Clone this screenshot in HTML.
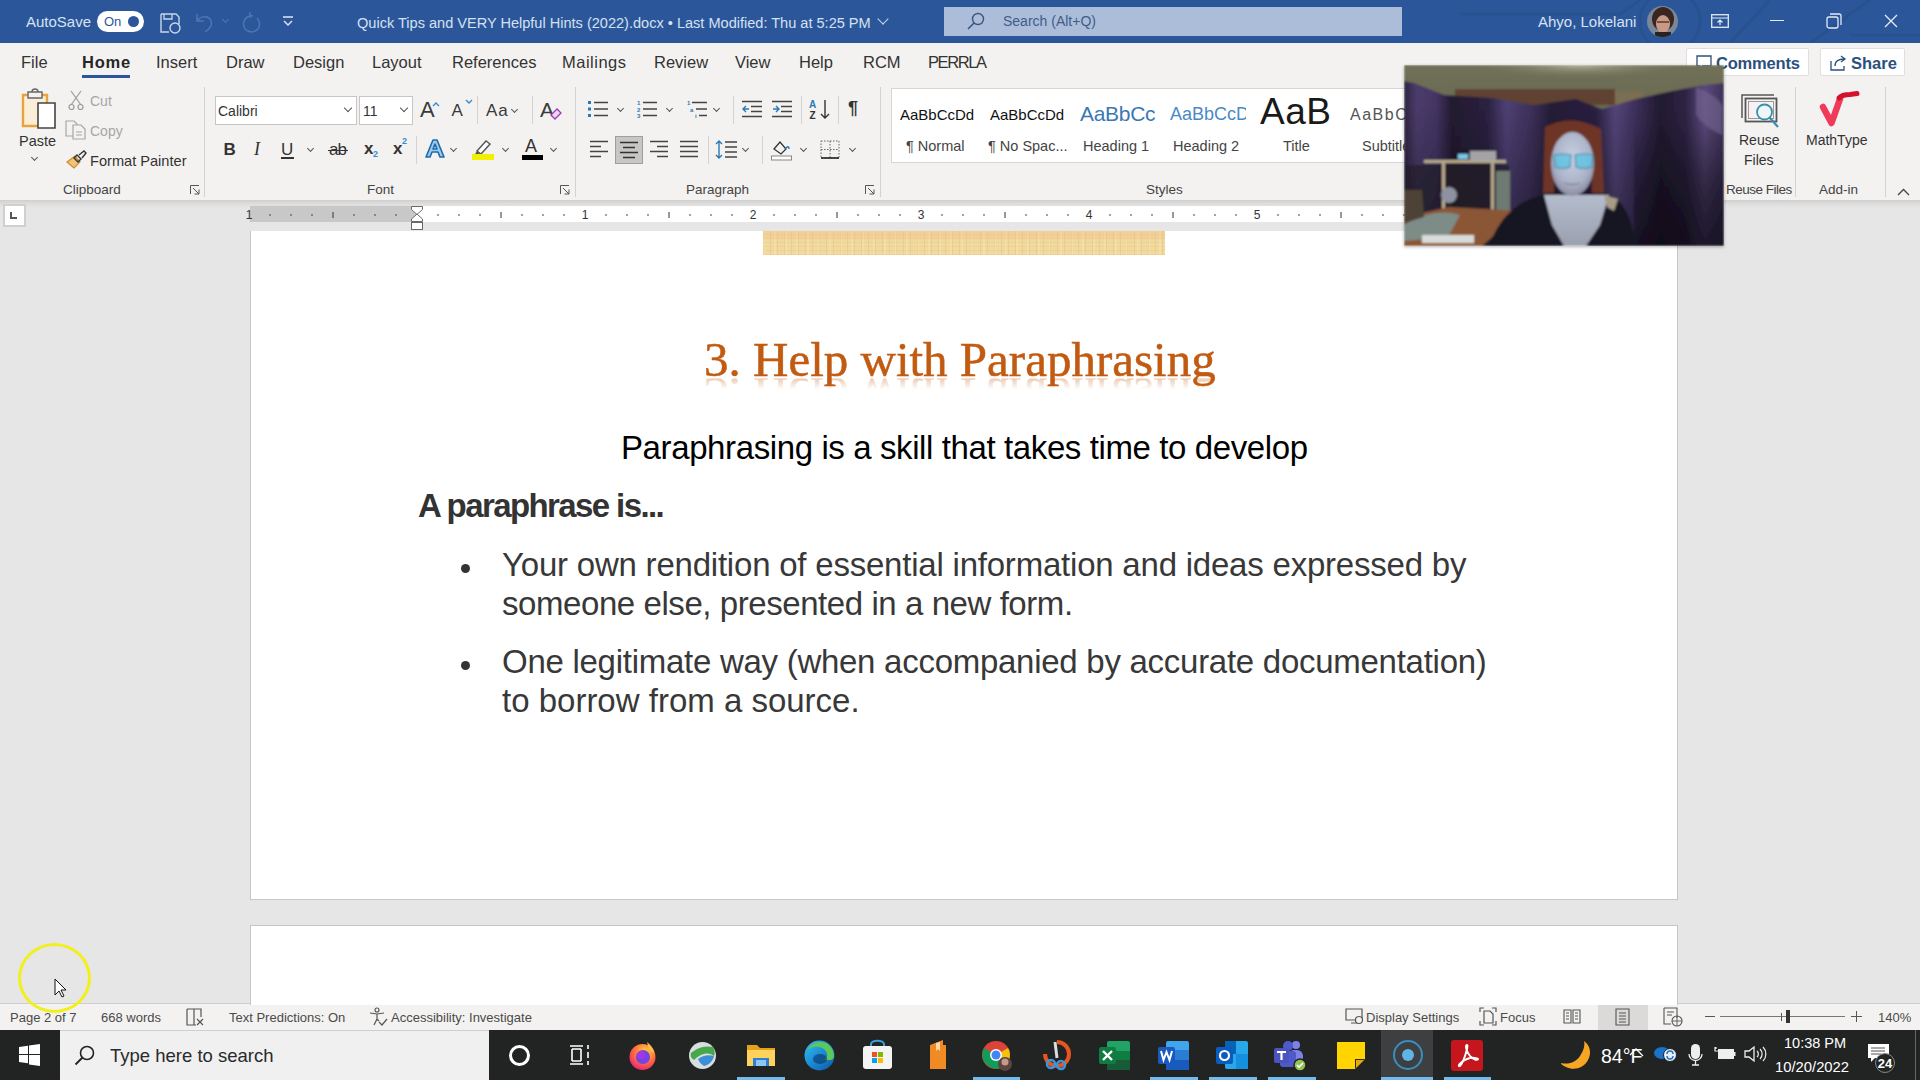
<!DOCTYPE html>
<html><head><meta charset="utf-8">
<style>
*{margin:0;padding:0;box-sizing:border-box}
html,body{width:1920px;height:1080px;overflow:hidden;background:#e6e6e6;font-family:"Liberation Sans",sans-serif}
.a{position:absolute;white-space:nowrap}
svg.a{overflow:visible}
#title{position:absolute;left:0;top:0;width:1920px;height:43px;background:#2b579a}
#tabs{position:absolute;left:0;top:43px;width:1920px;height:157px;background:#f3f2f1}
#doc{position:absolute;left:0;top:200px;width:1920px;height:805px;background:linear-gradient(180deg,#cfcfcf 0,#dedede 4px,#e6e6e6 8px,#e6e6e6 100%)}
#status{position:absolute;left:0;top:1003px;width:1920px;height:27px;background:#f3f2f1;border-top:1px solid #cfcdcb}
#task{position:absolute;left:0;top:1030px;width:1920px;height:50px;background:#222424}
.tb{color:#fff;font-size:15px}
.tab{font-size:16.5px;color:#333;top:53px}
.glabel{font-size:13.5px;color:#444;top:182px}
.rt{font-size:14px;color:#333}
.st{font-size:13px;color:#4a4a4a;top:1010px}
.sep{position:absolute;width:1px;background:#d4d2d0}
.gsep{position:absolute;width:1px;top:87px;height:110px;background:#d4d2d0}
.chev{position:absolute;width:6px;height:6px;border-right:1.3px solid #555;border-bottom:1.3px solid #555;transform:rotate(45deg)}
</style></head><body>
<div id="title"></div>
<div id="tabs"></div>
<div id="doc"></div>
<div id="status"></div>
<div id="task"></div>

<!-- ===== TITLE BAR ===== -->
<div class="a tb" style="left:26px;top:12.5px;color:#d8e2f2">AutoSave</div>
<div class="a" style="left:97px;top:11px;width:47px;height:21px;border-radius:11px;background:#fff"></div>
<div class="a" style="left:104px;top:14px;font-size:13px;color:#2b579a">On</div>
<div class="a" style="left:128px;top:16px;width:11px;height:11px;border-radius:6px;background:#2b579a"></div>
<svg class="a" style="left:160px;top:13px" width="21" height="20" viewBox="0 0 21 20"><path d="M1 1h15l3 3v7M1 1v18h8" fill="none" stroke="#c9d6ea" stroke-width="1.4"/><path d="M4 1v5h8V1" fill="none" stroke="#c9d6ea" stroke-width="1.3"/><circle cx="15" cy="15" r="5" fill="none" stroke="#c9d6ea" stroke-width="1.4"/></svg>
<svg class="a" style="left:195px;top:11px" width="20" height="22" viewBox="0 0 20 22"><path d="M2 3v7h7M2 10C5 5 14 4 16 10c2 5-3 9-6 11" fill="none" stroke="#4f76b4" stroke-width="1.5"/></svg>
<div class="chev" style="left:223px;top:17px;width:5px;height:5px;border-color:#4f76b4"></div>
<svg class="a" style="left:242px;top:10px" width="22" height="24" viewBox="0 0 22 24"><path d="M8 2v6M11 6a8 8 0 1 0 4 2" fill="none" stroke="#4f76b4" stroke-width="1.5"/></svg>
<svg class="a" style="left:281px;top:16px" width="14" height="12" viewBox="0 0 14 12"><path d="M2 1h10M3 5l4 4 4-4" fill="none" stroke="#dfe7f3" stroke-width="1.4"/></svg>
<div class="a tb" style="left:357px;top:14.5px;color:#d5e0f2;font-size:14.55px">Quick Tips and VERY Helpful Hints (2022).docx • Last Modified: Thu at 5:25 PM</div>
<div class="chev" style="left:879px;top:15px;width:8px;height:8px;border-color:#c8d6ee"></div>
<div class="a" style="left:944px;top:7px;width:458px;height:29px;background:#abbdd9"></div>
<svg class="a" style="left:966px;top:11px" width="20" height="20" viewBox="0 0 20 20"><circle cx="12" cy="8" r="5.5" fill="none" stroke="#3b5580" stroke-width="1.4"/><path d="M8 12l-6 6" stroke="#3b5580" stroke-width="1.6"/></svg>
<div class="a" style="left:1003px;top:13px;font-size:14px;color:#3f5c8a">Search (Alt+Q)</div>
<svg class="a" style="left:1430px;top:0;overflow:hidden" width="490" height="43" viewBox="0 0 490 43"><g fill="none" stroke="#28528f" stroke-width="3"><path d="M30 14h160l20-14"/><circle cx="240" cy="21" r="30"/><path d="M300 43l40-43M380 43l60-43M420 35h70"/></g></svg>
<div class="a tb" style="left:1538px;top:12.5px;color:#d8e2f2">Ahyo, Lokelani</div>
<svg class="a" style="left:1647px;top:6px" width="31" height="31" viewBox="0 0 31 31"><defs><clipPath id="av"><circle cx="15.5" cy="15.5" r="15.5"/></clipPath></defs><g clip-path="url(#av)"><rect width="31" height="31" fill="#7a8796"/><ellipse cx="16" cy="13" rx="11" ry="12" fill="#3a2620"/><ellipse cx="16" cy="18" rx="7" ry="9" fill="#c89a86"/><rect x="8" y="26" width="16" height="6" fill="#2a2220"/><path d="M10 16h12" stroke="#5a3a30" stroke-width="1.5"/></g></svg>
<svg class="a" style="left:1711px;top:14px" width="18" height="14" viewBox="0 0 18 14"><rect x="0.7" y="0.7" width="16.6" height="12.6" fill="none" stroke="#e3eaf5" stroke-width="1.3"/><path d="M1 4h16M9 11V6M6.5 8.5L9 6l2.5 2.5" fill="none" stroke="#e3eaf5" stroke-width="1.2"/></svg>
<div class="a" style="left:1770px;top:20px;width:14px;height:1.3px;background:#e3eaf5"></div>
<svg class="a" style="left:1826px;top:13px" width="16" height="16" viewBox="0 0 16 16"><rect x="1" y="4" width="11" height="11" rx="2" fill="none" stroke="#e3eaf5" stroke-width="1.3"/><path d="M4 1h9a2 2 0 0 1 2 2v9" fill="none" stroke="#e3eaf5" stroke-width="1.3"/></svg>
<svg class="a" style="left:1884px;top:14px" width="14" height="14" viewBox="0 0 14 14"><path d="M1 1l12 12M13 1L1 13" stroke="#e3eaf5" stroke-width="1.4"/></svg>

<!-- ===== TABS ===== -->
<div class="a tab" style="left:21px">File</div>
<div class="a tab" style="left:82px;color:#262626;font-weight:bold;letter-spacing:.8px">Home</div>
<div class="a" style="left:82px;top:75px;width:48px;height:3px;background:#2b579a"></div>
<div class="a tab" style="left:156px">Insert</div>
<div class="a tab" style="left:226px">Draw</div>
<div class="a tab" style="left:293px">Design</div>
<div class="a tab" style="left:372px">Layout</div>
<div class="a tab" style="left:452px">References</div>
<div class="a tab" style="left:562px;letter-spacing:.5px">Mailings</div>
<div class="a tab" style="left:654px">Review</div>
<div class="a tab" style="left:735px">View</div>
<div class="a tab" style="left:799px">Help</div>
<div class="a tab" style="left:863px">RCM</div>
<div class="a tab" style="left:928px;letter-spacing:-1.4px">PERRLA</div>

<!-- ===== RIBBON: CLIPBOARD ===== -->
<svg class="a" style="left:20px;top:88px" width="38" height="42" viewBox="0 0 38 42"><path d="M3 7h24v31H3z" fill="#fbeed8" stroke="#e8a33d" stroke-width="2.4"/><path d="M8 4h14v6H8z" fill="#f3f2f1" stroke="#666" stroke-width="1.4"/><path d="M12 4a3 3 0 0 1 6 0" fill="none" stroke="#666" stroke-width="1.4"/><path d="M18 15h17v25H18z" fill="#fff" stroke="#444" stroke-width="1.6"/></svg>
<div class="a rt" style="left:19px;top:133px;font-size:14.5px">Paste</div>
<div class="chev" style="left:32px;top:155px;width:5px;height:5px"></div>
<svg class="a" style="left:68px;top:90px" width="16" height="21" viewBox="0 0 16 21"><path d="M3 1l10 14M13 1L3 15" stroke="#9a9a9a" stroke-width="1.2"/><circle cx="3.5" cy="17" r="2.5" fill="none" stroke="#9a9a9a" stroke-width="1.2"/><circle cx="12.5" cy="17" r="2.5" fill="none" stroke="#9a9a9a" stroke-width="1.2"/></svg>
<div class="a rt" style="left:90px;top:93px;color:#a6a6a6">Cut</div>
<svg class="a" style="left:65px;top:120px" width="22" height="20" viewBox="0 0 22 20"><path d="M1 1h8l3 3v12H1z" fill="none" stroke="#a6a6a6" stroke-width="1.2"/><path d="M8 5h8l4 4v10H8z" fill="#f3f2f1" stroke="#a6a6a6" stroke-width="1.2"/><path d="M11 12h6M11 15h6" stroke="#a6a6a6"/></svg>
<div class="a rt" style="left:90px;top:123px;color:#a6a6a6">Copy</div>
<svg class="a" style="left:65px;top:150px" width="22" height="19" viewBox="0 0 22 19"><path d="M2 12l8-6 5 6-6 6z" fill="#f3c277" stroke="#d08b2a" stroke-width="1.2"/><path d="M9 8l3-3 4 4-3 3z" fill="none" stroke="#333" stroke-width="1.4"/><path d="M14 5l5-4 2 2-4 5" fill="none" stroke="#333" stroke-width="1.4"/></svg>
<div class="a rt" style="left:90px;top:153px;font-size:14.6px">Format Painter</div>
<div class="a glabel" style="left:63px">Clipboard</div>
<svg class="a" style="left:190px;top:185px" width="10" height="10" viewBox="0 0 10 10"><path d="M0.5 9V0.5H9M3 3l6 6M9 4.5V9H4.5" fill="none" stroke="#555" stroke-width="1"/></svg>
<div class="gsep" style="left:204px"></div>

<!-- ===== RIBBON: FONT ===== -->
<div class="a" style="left:215px;top:96px;width:142px;height:29px;background:#fff;border:1px solid #c8c6c4"></div>
<div class="a rt" style="left:218px;top:103px;font-size:14px">Calibri</div>
<div class="chev" style="left:345px;top:105px;width:6px;height:6px"></div>
<div class="a" style="left:359px;top:96px;width:54px;height:29px;background:#fff;border:1px solid #c8c6c4"></div>
<div class="a rt" style="left:363px;top:103px;font-size:14px">11</div>
<div class="chev" style="left:401px;top:105px;width:6px;height:6px"></div>
<div class="a" style="left:420px;top:97px;font-size:22px;color:#3a3a3a">A</div>
<svg class="a" style="left:432px;top:101px" width="8" height="6" viewBox="0 0 8 6"><path d="M1 5l3-3 3 3" fill="none" stroke="#3a8ad0" stroke-width="1.4"/></svg>
<div class="a" style="left:451.5px;top:101px;font-size:17px;color:#3a3a3a">A</div>
<svg class="a" style="left:465px;top:99px" width="8" height="6" viewBox="0 0 8 6"><path d="M1 1l3 3 3-3" fill="none" stroke="#3a8ad0" stroke-width="1.4"/></svg>
<div class="sep" style="left:477px;top:96px;height:28px"></div>
<div class="a" style="left:486px;top:101px;font-size:17px;color:#3a3a3a;letter-spacing:1px">Aa</div>
<div class="chev" style="left:512px;top:107px;width:5px;height:5px"></div>
<div class="sep" style="left:532px;top:96px;height:28px"></div>
<div class="a" style="left:540px;top:98px;font-size:21px;color:#3a3a3a">A</div>
<svg class="a" style="left:549px;top:107px" width="13" height="12" viewBox="0 0 13 12"><path d="M2 8l6-6 4 4-6 6z" fill="#f0d6f5" stroke="#9b3eb0" stroke-width="1.3"/></svg>
<div class="sep" style="left:416px;top:136px;height:28px"></div>
<div class="a" style="left:223.5px;top:140px;font-size:17px;font-weight:bold;color:#333">B</div>
<div class="a" style="left:254px;top:139px;font-size:18px;font-style:italic;font-family:'Liberation Serif',serif;color:#333">I</div>
<div class="a" style="left:281px;top:140px;font-size:17px;color:#333">U</div>
<div class="a" style="left:281px;top:157px;width:13px;height:1.5px;background:#333"></div>
<div class="chev" style="left:308px;top:146px;width:5px;height:5px"></div>
<div class="a" style="left:329px;top:140px;font-size:17px;color:#333;letter-spacing:-1px">ab</div>
<div class="a" style="left:328px;top:150px;width:20px;height:1.3px;background:#333"></div>
<div class="a" style="left:364px;top:139px;font-size:17px;font-weight:bold;color:#333">x</div>
<div class="a" style="left:373px;top:149px;font-size:9px;font-weight:bold;color:#3a8ad0">2</div>
<div class="a" style="left:393px;top:139px;font-size:17px;font-weight:bold;color:#333">x</div>
<div class="a" style="left:402px;top:136px;font-size:9px;font-weight:bold;color:#3a8ad0">2</div>
<svg class="a" style="left:424px;top:138px" width="22" height="21" viewBox="0 0 22 21"><path d="M2 19L9 2h4l7 17h-4l-2-5H8l-2 5z M9 11h4l-2-5z" fill="#9fcdf0" stroke="#1f6aa8" stroke-width="1.6" stroke-linejoin="round"/></svg>
<div class="chev" style="left:451px;top:146px;width:5px;height:5px"></div>
<svg class="a" style="left:472px;top:139px" width="22" height="22" viewBox="0 0 22 22"><path d="M5 12l9-10 4 3-9 10z" fill="#fff" stroke="#555" stroke-width="1.4"/><path d="M5 12l-2 3h5" fill="#555"/><rect x="0" y="15" width="22" height="6" fill="#f2f000"/></svg>
<div class="chev" style="left:503px;top:146px;width:5px;height:5px"></div>
<div class="a" style="left:525px;top:136px;font-size:18px;color:#333">A</div>
<div class="a" style="left:522px;top:155px;width:21px;height:5px;background:#000"></div>
<div class="chev" style="left:551px;top:146px;width:5px;height:5px"></div>
<div class="a glabel" style="left:367px">Font</div>
<svg class="a" style="left:560px;top:185px" width="10" height="10" viewBox="0 0 10 10"><path d="M0.5 9V0.5H9M3 3l6 6M9 4.5V9H4.5" fill="none" stroke="#555" stroke-width="1"/></svg>
<div class="gsep" style="left:575px"></div>


<!-- ===== RIBBON: PARAGRAPH ===== -->
<svg class="a" style="left:587px;top:99px" width="22" height="20" viewBox="0 0 22 20"><g fill="#2a78b8"><rect x="1" y="2" width="3" height="3"/><rect x="1" y="8.5" width="3" height="3"/><rect x="1" y="15" width="3" height="3"/></g><g stroke="#444" stroke-width="1.4"><path d="M7 3.5h14M7 10h14M7 16.5h14"/></g></svg>
<div class="chev" style="left:618px;top:106px;width:5px;height:5px"></div>
<svg class="a" style="left:636px;top:99px" width="22" height="20" viewBox="0 0 22 20"><g fill="#2a78b8" font-size="6" font-family="Liberation Sans" font-weight="bold"><text x="1" y="6">1</text><text x="1" y="12.5">2</text><text x="1" y="19">3</text></g><g stroke="#444" stroke-width="1.4"><path d="M7 3.5h14M7 10h14M7 16.5h14"/></g></svg>
<div class="chev" style="left:667px;top:106px;width:5px;height:5px"></div>
<svg class="a" style="left:686px;top:99px" width="22" height="20" viewBox="0 0 22 20"><g fill="#2a78b8" font-size="6" font-family="Liberation Sans" font-weight="bold"><text x="1" y="6">1</text><text x="4" y="12.5">a</text><text x="9" y="19">i</text></g><g stroke="#444" stroke-width="1.4"><path d="M6 3.5h15M10 10h11M13 16.5h8"/></g></svg>
<div class="chev" style="left:714px;top:106px;width:5px;height:5px"></div>
<div class="sep" style="left:733px;top:96px;height:28px"></div>
<svg class="a" style="left:742px;top:100px" width="20" height="18" viewBox="0 0 20 18"><g stroke="#444" stroke-width="1.4"><path d="M0 1.5h20M9 6.5h11M9 11.5h11M0 16.5h20"/></g><path d="M7 9H1M4 6L1 9l3 3" fill="none" stroke="#2a78b8" stroke-width="1.4"/></svg>
<svg class="a" style="left:772px;top:100px" width="20" height="18" viewBox="0 0 20 18"><g stroke="#444" stroke-width="1.4"><path d="M0 1.5h20M9 6.5h11M9 11.5h11M0 16.5h20"/></g><path d="M1 9h6M4 6l3 3-3 3" fill="none" stroke="#2a78b8" stroke-width="1.4"/></svg>
<div class="sep" style="left:801px;top:96px;height:28px"></div>
<svg class="a" style="left:809px;top:99px" width="21" height="21" viewBox="0 0 21 21"><text x="0" y="9" font-size="10" font-weight="bold" font-family="Liberation Sans" fill="#2a78b8">A</text><text x="0.5" y="20" font-size="10" font-weight="bold" font-family="Liberation Sans" fill="#333">Z</text><path d="M16 1v18M12 15l4 4 4-4" fill="none" stroke="#333" stroke-width="1.4"/></svg>
<div class="sep" style="left:838px;top:96px;height:28px"></div>
<div class="a" style="left:848px;top:98px;font-size:18px;font-weight:bold;color:#333">¶</div>
<svg class="a" style="left:590px;top:140px" width="19" height="18" viewBox="0 0 19 18"><g stroke="#444" stroke-width="1.4"><path d="M0 1.5h18M0 6.5h11M0 11.5h18M0 16.5h11"/></g></svg>
<div class="a" style="left:615px;top:136px;width:28px;height:28px;background:#c8c6c4;border:1px solid #a19f9d"></div>
<svg class="a" style="left:620px;top:141px" width="19" height="18" viewBox="0 0 19 18"><g stroke="#333" stroke-width="1.4"><path d="M0 1.5h18M3 6.5h12M0 11.5h18M3 16.5h12"/></g></svg>
<svg class="a" style="left:650px;top:140px" width="19" height="18" viewBox="0 0 19 18"><g stroke="#444" stroke-width="1.4"><path d="M0 1.5h18M7 6.5h11M0 11.5h18M7 16.5h11"/></g></svg>
<svg class="a" style="left:680px;top:140px" width="19" height="18" viewBox="0 0 19 18"><g stroke="#444" stroke-width="1.4"><path d="M0 1.5h18M0 6.5h18M0 11.5h18M0 16.5h18"/></g></svg>
<div class="sep" style="left:708px;top:136px;height:28px"></div>
<svg class="a" style="left:715px;top:140px" width="22" height="19" viewBox="0 0 22 19"><path d="M4 1v17M1 4l3-3 3 3M1 15l3 3 3-3" fill="none" stroke="#2a78b8" stroke-width="1.4"/><g stroke="#444" stroke-width="1.4"><path d="M10 2h12M10 7h12M10 12h12M10 17h12"/></g></svg>
<div class="chev" style="left:743px;top:146px;width:5px;height:5px"></div>
<div class="sep" style="left:762px;top:136px;height:28px"></div>
<svg class="a" style="left:771px;top:140px" width="21" height="21" viewBox="0 0 21 21"><path d="M3 9l6-7 6 7-5 5z" fill="none" stroke="#333" stroke-width="1.3"/><path d="M14 9c2-3 4-3 4 0" fill="none" stroke="#2a78b8" stroke-width="1.4"/><rect x="0.5" y="16" width="20" height="4" fill="#fff" stroke="#888"/></svg>
<div class="chev" style="left:801px;top:146px;width:5px;height:5px"></div>
<svg class="a" style="left:820px;top:140px" width="20" height="19" viewBox="0 0 20 19"><path d="M1 1h18v17H1z M10 1v17 M1 9.5h18" fill="none" stroke="#666" stroke-width="1" stroke-dasharray="1.5 1.5"/><path d="M1 18h18" stroke="#222" stroke-width="1.6"/></svg>
<div class="chev" style="left:850px;top:146px;width:5px;height:5px"></div>
<div class="a glabel" style="left:686px">Paragraph</div>
<svg class="a" style="left:865px;top:185px" width="10" height="10" viewBox="0 0 10 10"><path d="M0.5 9V0.5H9M3 3l6 6M9 4.5V9H4.5" fill="none" stroke="#555" stroke-width="1"/></svg>
<div class="gsep" style="left:880px"></div>

<!-- ===== RIBBON: STYLES ===== -->
<div class="a" style="left:891px;top:88px;width:540px;height:75px;background:#fff;border:1px solid #d8d6d4"></div>
<div class="a" style="left:900px;top:106px;font-size:15px;color:#111">AaBbCcDd</div>
<div class="a" style="left:906px;top:138px;font-size:14.5px;color:#444">¶ Normal</div>
<div class="a" style="left:990px;top:106px;font-size:15px;color:#111">AaBbCcDd</div>
<div class="a" style="left:988px;top:138px;font-size:14.5px;color:#444">¶ No Spac...</div>
<div class="a" style="left:1080px;top:102px;font-size:21px;color:#3a78b4;width:76px;overflow:hidden;letter-spacing:-.3px">AaBbCc</div>
<div class="a" style="left:1083px;top:138px;font-size:14.5px;color:#444">Heading 1</div>
<div class="a" style="left:1170px;top:104px;font-size:18px;color:#4a8ac4;width:76px;overflow:hidden">AaBbCcD</div>
<div class="a" style="left:1173px;top:138px;font-size:14.5px;color:#444">Heading 2</div>
<div class="a" style="left:1260px;top:91px;font-size:37px;color:#1a1a1a;letter-spacing:.5px">AaB</div>
<div class="a" style="left:1283px;top:138px;font-size:14.5px;color:#444">Title</div>
<div class="a" style="left:1350px;top:106px;font-size:16px;color:#555;letter-spacing:1.5px">AaBbC</div>
<div class="a" style="left:1362px;top:138px;font-size:14.5px;color:#444">Subtitle</div>
<div class="a glabel" style="left:1146px">Styles</div>

<!-- ===== RIBBON: RIGHT ===== -->
<div class="a" style="left:1686px;top:48px;width:123px;height:28px;background:#fff;border:1px solid #e1dfdd;border-radius:2px"></div>
<svg class="a" style="left:1696px;top:55px" width="16" height="17" viewBox="0 0 16 17"><path d="M1 1h14v10H7l-4 4v-4H1z" fill="none" stroke="#2b4f7f" stroke-width="1.3"/></svg>
<div class="a" style="left:1716px;top:54px;font-size:16.5px;font-weight:bold;color:#2b4f7f;letter-spacing:-.2px">Comments</div>
<div class="a" style="left:1820px;top:48px;width:85px;height:28px;background:#fff;border:1px solid #e1dfdd;border-radius:2px"></div>
<svg class="a" style="left:1830px;top:55px" width="17" height="16" viewBox="0 0 17 16"><path d="M1 6v9h13v-4" fill="none" stroke="#2b4f7f" stroke-width="1.3"/><path d="M5 11c0-5 4-7 9-7M11 1l4 3-4 3" fill="none" stroke="#2b4f7f" stroke-width="1.3"/></svg>
<div class="a" style="left:1851px;top:54px;font-size:16.5px;font-weight:bold;color:#2b4f7f">Share</div>
<svg class="a" style="left:1741px;top:94px" width="39" height="36" viewBox="0 0 39 36"><path d="M1 24V1H33" fill="none" stroke="#555" stroke-width="1.5"/><rect x="4.5" y="4.5" width="31" height="23" fill="#f6f2f4" stroke="#555" stroke-width="1.8"/><rect x="7.5" y="7.5" width="25" height="17" fill="none" stroke="#999" stroke-width="1"/><path d="M28.5 23.5L37 33" stroke="#3a90a8" stroke-width="2.2"/><circle cx="23.5" cy="18" r="7.5" fill="#eef6f8" stroke="#3a90a8" stroke-width="1.8"/></svg>
<div class="a rt" style="left:1739px;top:132px">Reuse</div>
<div class="a rt" style="left:1744px;top:152px">Files</div>
<div class="gsep" style="left:1795px"></div>
<svg class="a" style="left:1818px;top:90px" width="43" height="37" viewBox="0 0 43 37"><path d="M5 17L13.5 33L22 9" fill="none" stroke="#ef3a5a" stroke-width="6.5" stroke-linecap="round" stroke-linejoin="round"/><path d="M21 8Q24 4.5 32 4.5L39 3.5" fill="none" stroke="#d4122e" stroke-width="5" stroke-linecap="round"/></svg>
<div class="a rt" style="left:1806px;top:132px">MathType</div>
<div class="a glabel" style="left:1726px;letter-spacing:-.5px">Reuse Files</div>
<div class="a glabel" style="left:1819px">Add-in</div>
<div class="gsep" style="left:1885px"></div>
<svg class="a" style="left:1897px;top:188px" width="13" height="8" viewBox="0 0 13 8"><path d="M1 7l5.5-5.5L12 7" fill="none" stroke="#444" stroke-width="1.3"/></svg>

<!-- ===== RULER ===== -->
<div class="a" style="left:3px;top:204px;width:23px;height:23px;background:#fff;border:2px solid #d0d0d0"></div>
<div class="a" style="left:10px;top:212px;width:2px;height:7px;background:#555"></div>
<div class="a" style="left:10px;top:217px;width:7px;height:2px;background:#555"></div>
<div class="a" style="left:250px;top:206px;width:1428px;height:16px;background:#fff"></div>
<div class="a" style="left:250px;top:206px;width:167px;height:16px;background:#c8c8c8"></div>
<svg class="a" style="left:240px;top:204px;z-index:5" width="1440" height="30" viewBox="0 0 1440 30" id="ruler"><text x="9" y="15" font-size="12" font-family="Liberation Sans" fill="#333" text-anchor="middle">1</text><rect x="29.5" y="10" width="1" height="2" fill="#444"/><rect x="50.5" y="10" width="1" height="2" fill="#444"/><rect x="71.5" y="10" width="1" height="2" fill="#444"/><rect x="92.5" y="8" width="1" height="6" fill="#333"/><rect x="113.5" y="10" width="1" height="2" fill="#444"/><rect x="134.5" y="10" width="1" height="2" fill="#444"/><rect x="155.5" y="10" width="1" height="2" fill="#444"/><rect x="197.5" y="10" width="1" height="2" fill="#444"/><rect x="218.5" y="10" width="1" height="2" fill="#444"/><rect x="239.5" y="10" width="1" height="2" fill="#444"/><rect x="260.5" y="8" width="1" height="6" fill="#333"/><rect x="281.5" y="10" width="1" height="2" fill="#444"/><rect x="302.5" y="10" width="1" height="2" fill="#444"/><rect x="323.5" y="10" width="1" height="2" fill="#444"/><text x="345" y="15" font-size="12" font-family="Liberation Sans" fill="#333" text-anchor="middle">1</text><rect x="365.5" y="10" width="1" height="2" fill="#444"/><rect x="386.5" y="10" width="1" height="2" fill="#444"/><rect x="407.5" y="10" width="1" height="2" fill="#444"/><rect x="428.5" y="8" width="1" height="6" fill="#333"/><rect x="449.5" y="10" width="1" height="2" fill="#444"/><rect x="470.5" y="10" width="1" height="2" fill="#444"/><rect x="491.5" y="10" width="1" height="2" fill="#444"/><text x="513" y="15" font-size="12" font-family="Liberation Sans" fill="#333" text-anchor="middle">2</text><rect x="533.5" y="10" width="1" height="2" fill="#444"/><rect x="554.5" y="10" width="1" height="2" fill="#444"/><rect x="575.5" y="10" width="1" height="2" fill="#444"/><rect x="596.5" y="8" width="1" height="6" fill="#333"/><rect x="617.5" y="10" width="1" height="2" fill="#444"/><rect x="638.5" y="10" width="1" height="2" fill="#444"/><rect x="659.5" y="10" width="1" height="2" fill="#444"/><text x="681" y="15" font-size="12" font-family="Liberation Sans" fill="#333" text-anchor="middle">3</text><rect x="701.5" y="10" width="1" height="2" fill="#444"/><rect x="722.5" y="10" width="1" height="2" fill="#444"/><rect x="743.5" y="10" width="1" height="2" fill="#444"/><rect x="764.5" y="8" width="1" height="6" fill="#333"/><rect x="785.5" y="10" width="1" height="2" fill="#444"/><rect x="806.5" y="10" width="1" height="2" fill="#444"/><rect x="827.5" y="10" width="1" height="2" fill="#444"/><text x="849" y="15" font-size="12" font-family="Liberation Sans" fill="#333" text-anchor="middle">4</text><rect x="869.5" y="10" width="1" height="2" fill="#444"/><rect x="890.5" y="10" width="1" height="2" fill="#444"/><rect x="911.5" y="10" width="1" height="2" fill="#444"/><rect x="932.5" y="8" width="1" height="6" fill="#333"/><rect x="953.5" y="10" width="1" height="2" fill="#444"/><rect x="974.5" y="10" width="1" height="2" fill="#444"/><rect x="995.5" y="10" width="1" height="2" fill="#444"/><text x="1017" y="15" font-size="12" font-family="Liberation Sans" fill="#333" text-anchor="middle">5</text><rect x="1037.5" y="10" width="1" height="2" fill="#444"/><rect x="1058.5" y="10" width="1" height="2" fill="#444"/><rect x="1079.5" y="10" width="1" height="2" fill="#444"/><rect x="1100.5" y="8" width="1" height="6" fill="#333"/><rect x="1121.5" y="10" width="1" height="2" fill="#444"/><rect x="1142.5" y="10" width="1" height="2" fill="#444"/><rect x="1163.5" y="10" width="1" height="2" fill="#444"/><text x="1185" y="15" font-size="12" font-family="Liberation Sans" fill="#333" text-anchor="middle">6</text><rect x="1205.5" y="10" width="1" height="2" fill="#444"/><rect x="1226.5" y="10" width="1" height="2" fill="#444"/><rect x="1247.5" y="10" width="1" height="2" fill="#444"/><rect x="1268.5" y="8" width="1" height="6" fill="#333"/><rect x="1289.5" y="10" width="1" height="2" fill="#444"/><rect x="1310.5" y="10" width="1" height="2" fill="#444"/><rect x="1331.5" y="10" width="1" height="2" fill="#444"/><text x="1353" y="15" font-size="12" font-family="Liberation Sans" fill="#333" text-anchor="middle">7</text><rect x="1373.5" y="10" width="1" height="2" fill="#444"/><rect x="1394.5" y="10" width="1" height="2" fill="#444"/><rect x="1415.5" y="10" width="1" height="2" fill="#444"/><path d="M171.5 2.5h11v3l-5.5 5-5.5-5z" fill="#fff" stroke="#6a6a6a" stroke-width="1"/><path d="M171.5 17.5v-2.5l5.5-5 5.5 5v2.5z" fill="#fff" stroke="#6a6a6a" stroke-width="1"/><rect x="171.5" y="18.5" width="11" height="7" fill="#fff" stroke="#6a6a6a" stroke-width="1"/></svg>

<!-- ===== PAGE ===== -->
<div class="a" style="left:250px;top:222px;width:1428px;height:678px;background:#fff;border:1px solid #c6c6c6;border-top:none"></div>
<div class="a" style="left:250px;top:222px;width:1428px;height:9px;background:#e6e6e6"></div>
<div class="a" style="left:250px;top:925px;width:1428px;height:80px;background:#fff;border:1px solid #c6c6c6;border-bottom:none"></div>
<div class="a" style="left:763px;top:231px;width:402px;height:24px;background:linear-gradient(180deg,rgba(240,190,140,.35) 0,rgba(240,190,140,.35) 30%,rgba(0,0,0,0) 40%),repeating-linear-gradient(90deg,rgba(200,160,90,.18) 0,rgba(200,160,90,.18) 1px,rgba(0,0,0,0) 1px,rgba(0,0,0,0) 7px),repeating-linear-gradient(90deg,rgba(255,240,200,.25) 0,rgba(255,240,200,.25) 2px,rgba(0,0,0,0) 2px,rgba(0,0,0,0) 11px),repeating-linear-gradient(0deg,rgba(200,160,90,.12) 0,rgba(200,160,90,.12) 1px,rgba(0,0,0,0) 1px,rgba(0,0,0,0) 4px),#f2d99e"></div>
<div class="a" style="left:704px;top:332px;font-family:'Liberation Serif',serif;font-size:49px;color:#c25b12;letter-spacing:-.0px;-webkit-text-stroke:.5px #c25b12;line-height:56px">3. Help with Paraphrasing</div>
<div class="a" style="left:704px;top:332px;font-family:'Liberation Serif',serif;font-size:49px;color:#c25b12;-webkit-text-stroke:.5px #c25b12;line-height:56px;transform:scaleY(-1);transform-origin:0 45px;opacity:.3;-webkit-mask-image:linear-gradient(180deg,rgba(0,0,0,0) 0,rgba(0,0,0,0) 58%,rgba(0,0,0,1) 77%,rgba(0,0,0,0) 79%)">3. Help with Paraphrasing</div>
<div class="a" style="left:621px;top:429px;font-size:33px;color:#000;letter-spacing:-.39px">Paraphrasing is a skill that takes time to develop</div>
<div class="a" style="left:418px;top:487px;font-size:33px;font-weight:bold;color:#333;letter-spacing:-1.6px">A paraphrase is...</div>
<div class="a" style="left:461px;top:564px;width:9px;height:9px;border-radius:50%;background:#333"></div>
<div class="a" style="left:502px;top:546px;font-size:33px;color:#383838;letter-spacing:-.215px">Your own rendition of essential information and ideas expressed by</div>
<div class="a" style="left:502px;top:585px;font-size:33px;color:#383838;letter-spacing:-.43px">someone else, presented in a new form.</div>
<div class="a" style="left:461px;top:661px;width:9px;height:9px;border-radius:50%;background:#333"></div>
<div class="a" style="left:502px;top:643px;font-size:33px;color:#383838;letter-spacing:-.27px">One legitimate way (when accompanied by accurate documentation)</div>
<div class="a" style="left:502px;top:682px;font-size:33px;color:#383838">to borrow from a source.</div>

<!-- cursor -->
<div class="a" style="z-index:20;left:18px;top:943px;width:73px;height:70px;border-radius:50%;border:3.5px solid #f2f01c"></div>
<svg class="a" style="z-index:20;left:54px;top:978px" width="13" height="20" viewBox="0 0 13 20"><path d="M1 1v16l4-4 3 6 2-1-3-6h5z" fill="#fff" stroke="#111" stroke-width="1"/></svg>

<!-- ===== WEBCAM ===== -->
<svg class="a" style="left:1404px;top:65px;overflow:hidden;z-index:10" width="320" height="181" viewBox="0 0 320 181">
<defs>
<linearGradient id="ceil" x1="0" y1="0" x2="0" y2="1"><stop offset="0" stop-color="#707058"/><stop offset=".6" stop-color="#62634e"/><stop offset="1" stop-color="#4e4e40"/></linearGradient>
<radialGradient id="lamp" cx=".55" cy="0" r=".35"><stop offset="0" stop-color="#d0d0b8" stop-opacity=".7"/><stop offset="1" stop-color="#6e6e58" stop-opacity="0"/></radialGradient>
<linearGradient id="drape" x1="0" y1="0" x2="1" y2="0">
<stop offset="0" stop-color="#2e2440"/><stop offset=".04" stop-color="#4a3c6a"/><stop offset=".1" stop-color="#433564"/><stop offset=".15" stop-color="#231b30"/><stop offset=".26" stop-color="#2a2140"/><stop offset=".32" stop-color="#4e4074"/><stop offset=".4" stop-color="#3c3058"/><stop offset=".46" stop-color="#251d36"/><stop offset=".6" stop-color="#2a2040"/><stop offset=".66" stop-color="#54457a"/><stop offset=".73" stop-color="#3a2e58"/><stop offset=".8" stop-color="#221a30"/><stop offset=".88" stop-color="#2e2444"/><stop offset=".94" stop-color="#5a4a7c"/><stop offset="1" stop-color="#3e3258"/></linearGradient>
<linearGradient id="dv" x1="0" y1="0" x2="0" y2="1"><stop offset="0" stop-color="#000" stop-opacity="0"/><stop offset="1" stop-color="#000" stop-opacity=".4"/></linearGradient>
<radialGradient id="face" cx=".5" cy=".4" r=".6"><stop offset="0" stop-color="#c8d0e2"/><stop offset=".7" stop-color="#aab2c8"/><stop offset="1" stop-color="#8a8aa0"/></radialGradient>
<linearGradient id="chest" x1="0" y1="0" x2="0" y2="1"><stop offset="0" stop-color="#b4bccc"/><stop offset="1" stop-color="#9aa0ae"/></linearGradient>
<linearGradient id="dr" x1="0" y1="0" x2="0" y2="1"><stop offset="0" stop-color="#0e0a16" stop-opacity="0"/><stop offset=".5" stop-color="#0e0a16" stop-opacity=".35"/><stop offset="1" stop-color="#0e0a16" stop-opacity=".6"/></linearGradient>
<filter id="bl" x="-10%" y="-10%" width="120%" height="120%"><feGaussianBlur stdDeviation="1.2"/></filter>
</defs>
<g filter="url(#bl)">
<rect width="320" height="181" fill="url(#ceil)"/>
<rect width="320" height="40" fill="url(#lamp)"/>
<rect x="51" y="24" width="160" height="16" fill="#5e4232"/>
<rect x="211" y="26" width="28" height="14" fill="#7a6e52"/>
<path d="M0 16 L10 18 L40 30 L88 33 L130 40 L172 34 L198 44 L232 34 L268 26 L300 20 L320 18 V181 H0z" fill="url(#drape)"/>
<rect y="40" width="320" height="141" fill="url(#dv)"/><rect x="230" y="60" width="90" height="121" fill="url(#dr)"/>
<path d="M292 22 Q312 30 318 40 L318 70 Q300 62 292 50z" fill="#7a6a98" opacity=".55"/>
<rect x="0" y="100" width="105" height="81" fill="#221c28" opacity=".7"/>
<path d="M20 95h82v3H20z M87 97h3v55h-3z M38 97h3v48h-3z" fill="#b8aa8c"/>
<path d="M66 86h26v10H66z" fill="#a4a4a6"/>
<path d="M54 89h10v5H54z" fill="#7ac8e8"/>
<path d="M92 106h14v40H92z" fill="#6e7a72"/>
<circle cx="45" cy="130" r="8" fill="#8e92a0"/>
<path d="M0 152 L45 142 L118 146 L78 181 H0z" fill="#8a5634"/>
<path d="M0 160 Q30 142 56 150 L44 172 L0 176z" fill="#7e8c88"/>
<path d="M18 170h52v8H18z" fill="#d8dcd8"/>
<path d="M0 125 L18 125 L20 152 L0 158z" fill="#4e4236"/>
<path d="M85 181 Q100 138 140 130 L205 130 Q225 136 232 181z" fill="#121622"/>
<path d="M140 130 L205 130 L196 160 L182 181 L160 181 L148 160z" fill="url(#chest)"/>
<path d="M200 130 L214 134 L210 146 L203 142z" fill="#a89c88"/>
<path d="M141 62 Q168 48 197 64 L200 128 L188 128 L187 90 L152 90 L150 128 L139 128z" fill="#6e3426"/>
<ellipse cx="168.5" cy="99" rx="21.5" ry="32" fill="url(#face)"/>
<path d="M150 90 Q159 88 167 90 L166 102 Q158 105 151 102z M171 90 Q180 88 189 90 L188 102 Q180 105 172 102z" fill="#58c4e4" fill-opacity=".75" stroke="#4a8aa8" stroke-width="1.2"/>
<path d="M160 118 Q168 121 176 118" stroke="#8a7a8a" stroke-width="1.3" fill="none"/>
</g>
</svg>
<div class="a" style="z-index:10;left:1404px;top:65px;width:320px;height:181px;box-shadow:0 1px 3px rgba(0,0,0,.3)"></div>

<!-- ===== STATUS BAR ===== -->
<div class="a st" style="left:10px">Page 2 of 7</div>
<div class="a st" style="left:101px">668 words</div>
<svg class="a" style="left:186px;top:1008px" width="19" height="18" viewBox="0 0 19 18"><path d="M1 1h14v8M1 1v16h9M8 1v16" fill="none" stroke="#555" stroke-width="1.2"/><path d="M11 11l6 6M17 11l-6 6" stroke="#555" stroke-width="1.2"/></svg>
<div class="a st" style="left:229px">Text Predictions: On</div>
<svg class="a" style="left:369px;top:1007px" width="19" height="19" viewBox="0 0 19 19"><circle cx="8" cy="3" r="2" fill="none" stroke="#555" stroke-width="1.1"/><path d="M1 6l7 1 7-1M8 7v5l-3 6M8 12l2 2M10 15l3 3 5-6" fill="none" stroke="#555" stroke-width="1.2"/></svg>
<div class="a st" style="left:391px">Accessibility: Investigate</div>
<svg class="a" style="left:1345px;top:1008px" width="19" height="17" viewBox="0 0 19 17"><path d="M1 1h16v11H1z M6 15h6" fill="none" stroke="#555" stroke-width="1.2"/><circle cx="14" cy="12" r="3.5" fill="#f3f2f1" stroke="#555" stroke-width="1.2"/></svg>
<div class="a st" style="left:1366px">Display Settings</div>
<svg class="a" style="left:1479px;top:1007px" width="18" height="19" viewBox="0 0 18 19"><path d="M1 5V1h4M13 1h4v4M17 14v4h-4M5 18H1v-4" fill="none" stroke="#555" stroke-width="1.2"/><path d="M5 4h6l3 3v9H5z" fill="none" stroke="#555" stroke-width="1.2"/></svg>
<div class="a st" style="left:1500px">Focus</div>
<svg class="a" style="left:1563px;top:1008px" width="18" height="16" viewBox="0 0 18 16"><path d="M1 2h7v13H1z M10 2h7v13h-7z M3 5h3M3 8h3M3 11h3M12 5h3M12 8h3M12 11h3" fill="none" stroke="#555" stroke-width="1.1"/></svg>
<div class="a" style="left:1598px;top:1005px;width:50px;height:25px;background:#dcdad8"></div>
<svg class="a" style="left:1615px;top:1008px" width="15" height="18" viewBox="0 0 15 18"><path d="M1 1h13v16H1z M4 5h7M4 8h7M4 11h7M4 14h7" fill="none" stroke="#555" stroke-width="1.1"/></svg>
<svg class="a" style="left:1663px;top:1007px" width="20" height="20" viewBox="0 0 20 20"><path d="M1 1h13v10M1 1v16h7M4 5h7M4 8h5" fill="none" stroke="#555" stroke-width="1.1"/><circle cx="14" cy="14" r="5" fill="none" stroke="#555" stroke-width="1.1"/><path d="M9 14h10M14 9v10" stroke="#555" stroke-width=".9"/></svg>
<div class="a" style="left:1705px;top:1016px;width:10px;height:1.2px;background:#555"></div>
<div class="a" style="left:1720px;top:1016px;width:125px;height:1px;background:#777"></div>
<div class="a" style="left:1781px;top:1013px;width:1px;height:8px;background:#555"></div>
<div class="a" style="left:1786px;top:1010px;width:4px;height:13px;background:#333"></div>
<div class="a" style="left:1851px;top:1016px;width:11px;height:1.2px;background:#555"></div>
<div class="a" style="left:1856px;top:1011px;width:1.2px;height:11px;background:#555"></div>
<div class="a st" style="left:1878px">140%</div>

<!-- ===== TASKBAR ===== -->
<svg class="a" style="left:19px;top:1044px" width="22" height="22" viewBox="0 0 22 22"><path d="M0 3l9-1.3V10H0z M10 1.5L21 0v10H10z M0 11h9v8.3L0 18z M10 11h11v11l-11-1.5z" fill="#fff"/></svg>
<div class="a" style="left:60px;top:1030px;width:429px;height:50px;background:#f0f0f0;border-top:1px solid #cfcfcf"></div>
<svg class="a" style="left:74px;top:1045px" width="22" height="22" viewBox="0 0 22 22"><circle cx="13" cy="8" r="6.5" fill="none" stroke="#222" stroke-width="1.6"/><path d="M8.5 12.5L1.5 19.5" stroke="#222" stroke-width="1.8"/></svg>
<div class="a" style="left:110px;top:1044.5px;font-size:18.5px;color:#2a2a2a">Type here to search</div>
<div class="a" style="left:509px;top:1045px;width:21px;height:21px;border-radius:50%;border:3px solid #fff"></div>
<svg class="a" style="left:569px;top:1044px" width="22" height="22" viewBox="0 0 22 22"><path d="M1 2h13M1 20h13M3 5v12M12 5v12M3 5h9M3 17h9" fill="none" stroke="#fff" stroke-width="1.6"/><path d="M19 1v4M19 8v6M19 17v4" stroke="#fff" stroke-width="1.6"/></svg>

<!-- taskbar icons -->
<svg class="a" style="left:627px;top:1040px" width="31" height="31" viewBox="0 0 31 31"><defs><radialGradient id="ff" cx=".6" cy=".3" r=".8"><stop offset="0" stop-color="#ffd53d"/><stop offset=".5" stop-color="#ff7139"/><stop offset="1" stop-color="#e31587"/></radialGradient></defs><circle cx="15.5" cy="17" r="13" fill="url(#ff)"/><path d="M20 2c4 3 7 7 7 11l-5-3z" fill="#ffbd4f"/><circle cx="16" cy="17" r="7" fill="#7542e5"/><circle cx="14" cy="15" r="4" fill="#b833e1" opacity=".7"/></svg>
<svg class="a" style="left:688px;top:1041px" width="29" height="29" viewBox="0 0 29 29"><circle cx="14.5" cy="14.5" r="13.5" fill="#d8dde0"/><path d="M3 12c5-4 12-8 22-6 2 3 2 7 1 9-6-5-14-2-20 4-3-2-4-4-3-7z" fill="#47a84a"/><path d="M10 18c4-3 10-5 16-3-1 5-5 9-10 10-3-2-5-4-6-7z" fill="#3a8fd6"/></svg>
<svg class="a" style="left:746px;top:1042px" width="30" height="25" viewBox="0 0 30 25"><path d="M1 3h10l3 3h15v18H1z" fill="#e3a21a"/><path d="M1 8h28v16H1z" fill="#ffd35b"/><path d="M7 16h16v8H7z" fill="#2d7fd3"/><path d="M10 18h10v6H10z" fill="#8fc5f3"/></svg>
<div class="a" style="left:737px;top:1077px;width:48px;height:3px;background:#76b9ed"></div>
<svg class="a" style="left:803px;top:1039px" width="33" height="33" viewBox="0 0 33 33"><defs><linearGradient id="edg" x1="0" y1="0" x2="1" y2="1"><stop offset="0" stop-color="#35c1f1"/><stop offset=".5" stop-color="#1b8ad3"/><stop offset="1" stop-color="#0c59a4"/></linearGradient></defs><circle cx="16.5" cy="16.5" r="15" fill="url(#edg)"/><path d="M31 17c0-8-6-14-14-14-5 0-10 3-12 8 3-3 7-4 11-3 6 1 9 6 8 10-1 2-4 3-8 3h12c2-1 3-2 3-4z" fill="#5ac85a"/><ellipse cx="17" cy="20" rx="7" ry="5" fill="#0d3f7a" opacity=".7"/></svg>
<svg class="a" style="left:862px;top:1040px" width="31" height="30" viewBox="0 0 31 30"><path d="M9 7V4a6 3 0 0 1 13 0v3" fill="none" stroke="#3aa0d8" stroke-width="2"/><rect x="1" y="6" width="29" height="23" rx="3" fill="#f4f4f4"/><rect x="10" y="12" width="5" height="5" fill="#f25022"/><rect x="16" y="12" width="5" height="5" fill="#7fba00"/><rect x="10" y="18" width="5" height="5" fill="#00a4ef"/><rect x="16" y="18" width="5" height="5" fill="#ffb900"/></svg>
<svg class="a" style="left:928px;top:1039px" width="20" height="31" viewBox="0 0 20 31"><path d="M2 6l13-5v5h3v24H2z" fill="#f08a24"/><path d="M8 4v8l2-2 2 2V3" fill="#ffd9a8"/></svg>
<svg class="a" style="left:981px;top:1040px" width="32" height="32" viewBox="0 0 32 32"><circle cx="15" cy="15" r="14" fill="#db4437"/><path d="M15 15L27 8a14 14 0 0 1-5 19z" fill="#f4c20d"/><path d="M15 15L22 27A14 14 0 0 1 3 8z" fill="#0f9d58"/><circle cx="15" cy="15" r="6" fill="#fff"/><circle cx="15" cy="15" r="4.5" fill="#4285f4"/><circle cx="24" cy="24" r="7" fill="#5a4640"/><circle cx="24" cy="22" r="3.5" fill="#c79a84"/></svg>
<div class="a" style="left:973px;top:1077px;width:47px;height:3px;background:#76b9ed"></div>
<svg class="a" style="left:1042px;top:1040px" width="30" height="30" viewBox="0 0 30 30"><path d="M15 2a12 12 0 1 1-12 12" fill="none" stroke="#e9551e" stroke-width="4"/><path d="M13 2l2 16" stroke="#ddd" stroke-width="3"/><circle cx="9" cy="24" r="4" fill="none" stroke="#3a96dd" stroke-width="2.5"/><circle cx="19" cy="25" r="4" fill="none" stroke="#3a96dd" stroke-width="2.5"/></svg>
<svg class="a" style="left:1099px;top:1041px" width="31" height="29" viewBox="0 0 31 29"><rect x="8" y="0" width="23" height="29" rx="2" fill="#21a366"/><rect x="8" y="10" width="23" height="9" fill="#107c41"/><rect x="8" y="19" width="23" height="10" fill="#185c37"/><rect x="0" y="6" width="17" height="17" rx="2" fill="#107c41"/><path d="M4 10l9 9M13 10l-9 9" stroke="#fff" stroke-width="2.4"/></svg>
<svg class="a" style="left:1158px;top:1041px" width="31" height="29" viewBox="0 0 31 29"><rect x="8" y="0" width="23" height="29" rx="2" fill="#41a5ee"/><rect x="8" y="9" width="23" height="10" fill="#2b7cd3"/><rect x="8" y="19" width="23" height="10" fill="#185abd"/><rect x="0" y="6" width="17" height="17" rx="2" fill="#185abd"/><path d="M3 10l2.5 9 3-8 3 8 2.5-9" fill="none" stroke="#fff" stroke-width="2"/></svg>
<div class="a" style="left:1150px;top:1077px;width:48px;height:3px;background:#76b9ed"></div>
<svg class="a" style="left:1216px;top:1040px" width="32" height="30" viewBox="0 0 32 30"><rect x="9" y="1" width="23" height="28" rx="2" fill="#28a8ea"/><rect x="9" y="1" width="11" height="13" fill="#0364b8"/><rect x="20" y="14" width="12" height="15" fill="#1490df"/><rect x="0" y="7" width="17" height="17" rx="2" fill="#0a5cc0"/><circle cx="8.5" cy="15.5" r="4.5" fill="none" stroke="#fff" stroke-width="2.2"/></svg>
<div class="a" style="left:1209px;top:1077px;width:48px;height:3px;background:#76b9ed"></div>
<svg class="a" style="left:1274px;top:1040px" width="33" height="32" viewBox="0 0 33 32"><circle cx="22" cy="5" r="4" fill="#7b83eb"/><rect x="14" y="10" width="15" height="14" rx="6" fill="#7b83eb"/><circle cx="14" cy="6" r="5" fill="#5059c9"/><rect x="6" y="11" width="16" height="16" rx="3" fill="#5059c9"/><rect x="0" y="8" width="15" height="15" rx="2" fill="#4b53bc"/><path d="M3 12h9M7.5 12v8" stroke="#fff" stroke-width="2.2"/><circle cx="26" cy="25" r="6" fill="#92c353" stroke="#222424" stroke-width="1.5"/><path d="M23 25l2 2 4-4" fill="none" stroke="#fff" stroke-width="1.6"/></svg>
<div class="a" style="left:1268px;top:1077px;width:48px;height:3px;background:#76b9ed"></div>
<svg class="a" style="left:1337px;top:1042px" width="28" height="27" viewBox="0 0 28 27"><path d="M0 0h28v17l-10 10H0z" fill="#ffd400"/><path d="M18 27V17h10z" fill="#2a2a2a"/><path d="M19 26v-8h8z" fill="#e9a80a"/></svg>
<div class="a" style="left:1381px;top:1030px;width:52px;height:50px;background:#3d3f40"></div>
<div class="a" style="left:1393px;top:1040px;width:30px;height:30px;border-radius:50%;border:2px solid #3a8fc0"></div>
<div class="a" style="left:1402px;top:1049px;width:12px;height:12px;border-radius:50%;background:#5fb3e6"></div>
<div class="a" style="left:1381px;top:1077px;width:52px;height:3px;background:#76b9ed"></div>
<svg class="a" style="left:1451px;top:1040px" width="32" height="31" viewBox="0 0 32 31"><rect x="0" y="0" width="32" height="31" rx="3" fill="#c4161c"/><path d="M16 5c-2 0-1 6 3 11s8 4 8 3-6-2-11 0-9 6-8 7 4-4 6-10 3-11 2-11z" fill="none" stroke="#fff" stroke-width="2"/></svg>
<div class="a" style="left:1444px;top:1077px;width:47px;height:3px;background:#76b9ed"></div>

<!-- tray -->
<svg class="a" style="left:1560px;top:1040px" width="32" height="31" viewBox="0 0 32 31"><path d="M24 1c6 4 8 12 4 19-4 8-14 11-22 7-3-1-5-3-5-4 8 2 15-1 19-7 4-6 5-11 4-15z" fill="#f6a623"/></svg>
<div class="a" style="left:1601px;top:1044.5px;font-size:19.5px;color:#fff">84°F</div>
<svg class="a" style="left:1629px;top:1047px" width="15" height="10" viewBox="0 0 15 10"><path d="M1 8l6-6 7 7" fill="none" stroke="#fff" stroke-width="1.3"/></svg>
<svg class="a" style="left:1653px;top:1044px" width="25" height="18" viewBox="0 0 25 18"><ellipse cx="9" cy="9" rx="8" ry="6" fill="#1a73c8"/><circle cx="17" cy="11" r="6.5" fill="#e6eef8" stroke="#222" stroke-width="1"/><path d="M14 10a3 3 0 0 1 6 0M20 12a3 3 0 0 1-6 0" fill="none" stroke="#1a73c8" stroke-width="1.4"/></svg>
<svg class="a" style="left:1688px;top:1043px" width="15" height="23" viewBox="0 0 15 23"><rect x="3" y="1" width="9" height="15" rx="4.5" fill="#eee"/><path d="M1 11a6.5 6.5 0 0 0 13 0M7.5 18v4M4 22h7" fill="none" stroke="#eee" stroke-width="1.3"/></svg>
<svg class="a" style="left:1714px;top:1046px" width="22" height="15" viewBox="0 0 22 15"><rect x="4" y="3" width="16" height="10" fill="#eee"/><rect x="20" y="6" width="1.5" height="4" fill="#eee"/><path d="M1 1v4h3M2 1v2" stroke="#eee" stroke-width="1.2"/></svg>
<svg class="a" style="left:1744px;top:1045px" width="22" height="18" viewBox="0 0 22 18"><path d="M1 6h4l5-4v14l-5-4H1z" fill="none" stroke="#eee" stroke-width="1.3"/><path d="M13 6a4 4 0 0 1 0 6M16 4a7 7 0 0 1 0 10M19 2a10 10 0 0 1 0 14" fill="none" stroke="#eee" stroke-width="1.2"/></svg>
<svg class="a" style="left:1867px;top:1043px" width="36" height="30" viewBox="0 0 36 30"><path d="M1 1h21v14H8l-4 4v-4H1z" fill="#fff"/><path d="M4 5h14M4 8h14M4 11h10" stroke="#555" stroke-width="1"/><circle cx="18" cy="20" r="9.5" fill="#222424" stroke="#888" stroke-width="1"/><text x="18" y="25" font-size="13" font-weight="bold" font-family="Liberation Sans" fill="#fff" text-anchor="middle">24</text></svg>
<div class="a" style="left:1915px;top:1030px;width:1px;height:50px;background:#666"></div>
<div class="a" style="left:1784px;top:1035px;font-size:14.5px;color:#fff">10:38 PM</div>
<div class="a" style="left:1775px;top:1058.5px;font-size:14.8px;color:#fff">10/20/2022</div>
</body></html>
